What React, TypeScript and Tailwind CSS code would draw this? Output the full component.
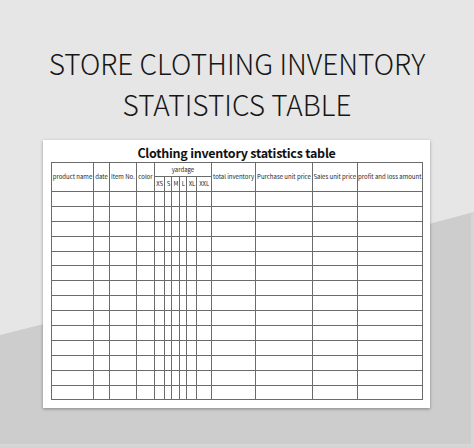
import React from "react";

const widths = [42, 16, 27, 18, 10.5, 7, 8, 7, 10, 14.5, 44, 57, 44.5, 65.5];
const sizes = ["XS", "S", "M", "L", "XL", "XXL"];

export default function App() {
  const rows = Array.from({ length: 14 });
  const cell = "border border-[#6b6b6b] p-0";
  const head = `${cell} whitespace-nowrap text-center align-middle`;
  return (
    <div
      className="relative w-[474px] h-[447px] overflow-hidden bg-[#e6e6e6]"
      style={{ fontFamily: '"Noto Sans CJK SC", "Noto Sans", sans-serif' }}
    >
      <svg className="absolute inset-0" width="474" height="447" viewBox="0 0 474 447">
        <path d="M0 335 Q 220 280 474 212 L474 447 L0 447 Z" fill="#cdcdcd" />
        <rect x="471" y="212" width="3" height="235" fill="#d6d6d6" />
        <rect x="0" y="444" width="474" height="3" fill="#d6d6d6" />
      </svg>
      <div className="relative flex flex-col items-center">
        <div className="pt-[43px] text-center text-[28px] leading-[41px] font-light text-[#161616]">
          <div>STORE CLOTHING INVENTORY</div>
          <div>STATISTICS TABLE</div>
        </div>
        <div className="mt-[15px] ml-[-1px] w-[387px] h-[268px] bg-white shadow-[0_1px_3px_rgba(0,0,0,0.35)] flex flex-col items-center">
          <div className="h-[22px] pt-[3px] leading-[19px] text-[12.5px] tracking-[-0.25px] font-bold text-[#111]">
            Clothing inventory statistics table
          </div>
          <table className="ml-[1px] table-fixed border-collapse w-[371px] text-[6px] text-[#1e1e1e] leading-none">
            <colgroup>
              {widths.map((w, i) => (
                <col key={i} style={{ width: `${w}px` }} />
              ))}
            </colgroup>
            <tbody>
              <tr className="h-[14px]">
                <td rowSpan={2} className={head}>product name</td>
                <td rowSpan={2} className={head}>date</td>
                <td rowSpan={2} className={head}>Item No.</td>
                <td rowSpan={2} className={head}>color</td>
                <td colSpan={6} className={head}>yardage</td>
                <td rowSpan={2} className={head}>total inventory</td>
                <td rowSpan={2} className={head}>Purchase unit price</td>
                <td rowSpan={2} className={head}>Sales unit price</td>
                <td rowSpan={2} className={head}>profit and loss amount</td>
              </tr>
              <tr className="h-[15px]">
                {sizes.map((s) => (
                  <td key={s} className={head}>{s}</td>
                ))}
              </tr>
              {rows.map((_, r) => (
                <tr key={r} className="h-[14.9px]">
                  {widths.map((_, c) => (
                    <td key={c} className={cell}></td>
                  ))}
                </tr>
              ))}
            </tbody>
          </table>
        </div>
      </div>
    </div>
  );
}
